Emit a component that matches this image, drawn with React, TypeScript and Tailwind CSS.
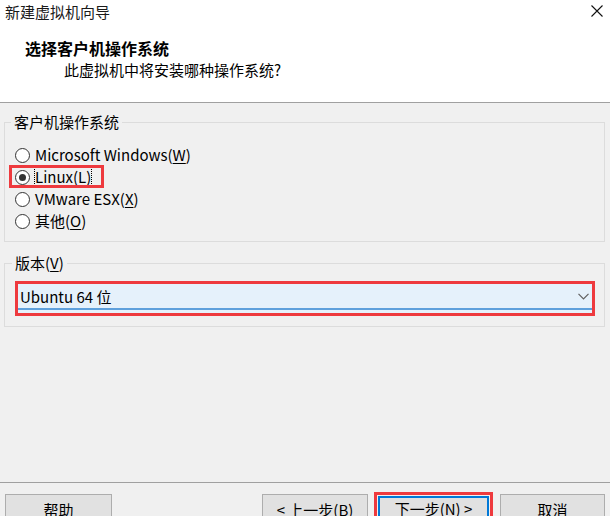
import React from "react";

const FONT = '"Microsoft YaHei", "Noto Sans CJK SC", sans-serif';

function Radio({ checked, children }: { checked?: boolean; children: React.ReactNode }) {
  return (
    <div className="relative flex h-[22px] items-center pl-[10px]">
      <span className="flex h-[15px] w-[15px] items-center justify-center rounded-full border border-[#333333] bg-white">
        {checked && <span className="h-[7px] w-[7px] rounded-full bg-[#333333]" />}
      </span>
      <span className="ml-[5px] text-[15px] leading-[20px] text-black">{children}</span>
    </div>
  );
}

function Btn({ children, className = "" }: { children: React.ReactNode; className?: string }) {
  return (
    <div
      className={
        "h-[30px] shrink-0 border border-[#adadad] bg-[#e1e1e1] pt-[5px] text-center text-[15px] leading-[20px] text-black " +
        className
      }
    >
      {children}
    </div>
  );
}

export default function App() {
  return (
    <div
      className="flex h-[516px] w-[610px] flex-col overflow-hidden bg-[#f0f0f0] text-black"
      style={{ fontFamily: FONT }}
    >
      {/* Header */}
      <div className="h-[102px] shrink-0 bg-white">
        <div className="flex items-start justify-between">
          <div className="pl-[5px] pt-[2px] text-[15px] leading-[20px] text-[#1a1a1a]">新建虚拟机向导</div>
          <svg width="12" height="12" viewBox="0 0 12 12" className="mr-[7px] mt-[5px]">
            <path d="M0.5 0.5 L11.5 11.5 M11.5 0.5 L0.5 11.5" stroke="#111" strokeWidth="1.1" fill="none" />
          </svg>
        </div>
        <div className="mt-[16px] pl-[25px] text-[16px] font-bold leading-[20px]">选择客户机操作系统</div>
        <div className="mt-[2px] pl-[64px] text-[15px] leading-[20px]">此虚拟机中将安装哪种操作系统?</div>
      </div>
      <div className="h-px shrink-0 bg-[#a0a0a0]" />

      {/* Body */}
      <div className="flex shrink-0 flex-col pt-[9px]">
        <fieldset className="ml-[4px] w-[601px] border border-[#dcdcdc] pb-[9px]">
          <legend className="ml-[6px] px-[3px] text-[15px] leading-[20px]">客户机操作系统</legend>
          <div className="pt-[12px]">
            <Radio>
              Microsoft Windows(<u className="underline-offset-2">W</u>)
            </Radio>
            <div className="relative">
              <Radio checked>
                <span className="outline-1 outline-dotted outline-black">
                  Linux(<u className="underline-offset-2">L</u>)
                </span>
              </Radio>
              <div className="pointer-events-none absolute left-[4px] top-[-1px] h-[23px] w-[95px] border-[3px] border-[#ee3a3e]" />
            </div>
            <Radio>
              VMware ESX(<u className="underline-offset-2">X</u>)
            </Radio>
            <Radio>
              其他(<u className="underline-offset-2">O</u>)
            </Radio>
          </div>
        </fieldset>

        <fieldset className="ml-[4px] mt-[11px] w-[601px] border border-[#dcdcdc] pb-[10px]">
          <legend className="ml-[7px] px-[3px] text-[15px] leading-[20px]">
            版本(<u className="underline-offset-2">V</u>)
          </legend>
          <div className="ml-[10px] mt-[8px] h-[35px] w-[580px] border-[3px] border-[#ee3a3e]">
            <div className="flex h-full flex-col bg-[#e5f1fb]">
              <div className="flex h-[24px] items-center justify-between pl-[2px] pr-[3px]">
                <span className="pt-[1px] text-[15px] leading-[20px]">Ubuntu 64 位</span>
                <svg width="11" height="7" viewBox="0 0 11 7">
                  <path d="M0.5 0.8 L5.5 5.8 L10.5 0.8" stroke="#606060" strokeWidth="1.2" fill="none" />
                </svg>
              </div>
              <div className="h-[2px] bg-[#5ea0dc]" />
            </div>
          </div>
        </fieldset>
      </div>

      <div className="h-[155px] shrink-0" />
      <div className="h-px shrink-0 bg-[#a0a0a0]" />

      {/* Buttons */}
      <div className="flex shrink-0 items-start pl-[5px] pr-[5px] pt-[11px]">
        <Btn className="w-[107px]">帮助</Btn>
        <div className="flex-1" />
        <Btn className="w-[106px]">&lt; 上一步(<u className="underline-offset-2">B</u>)</Btn>
        <div className="ml-[6px] mt-[-2px] h-[34px] w-[119px] shrink-0 border-[3px] border-[#ee3a3e] p-px">
          <div className="h-[30px] border-2 border-[#0078d7] bg-[#e1e1e1] pt-px text-center text-[15px] leading-[20px]">
            下一步(<u className="underline-offset-2">N</u>) &gt;
          </div>
        </div>
        <Btn className="ml-[7px] w-[105px]">取消</Btn>
      </div>
    </div>
  );
}
